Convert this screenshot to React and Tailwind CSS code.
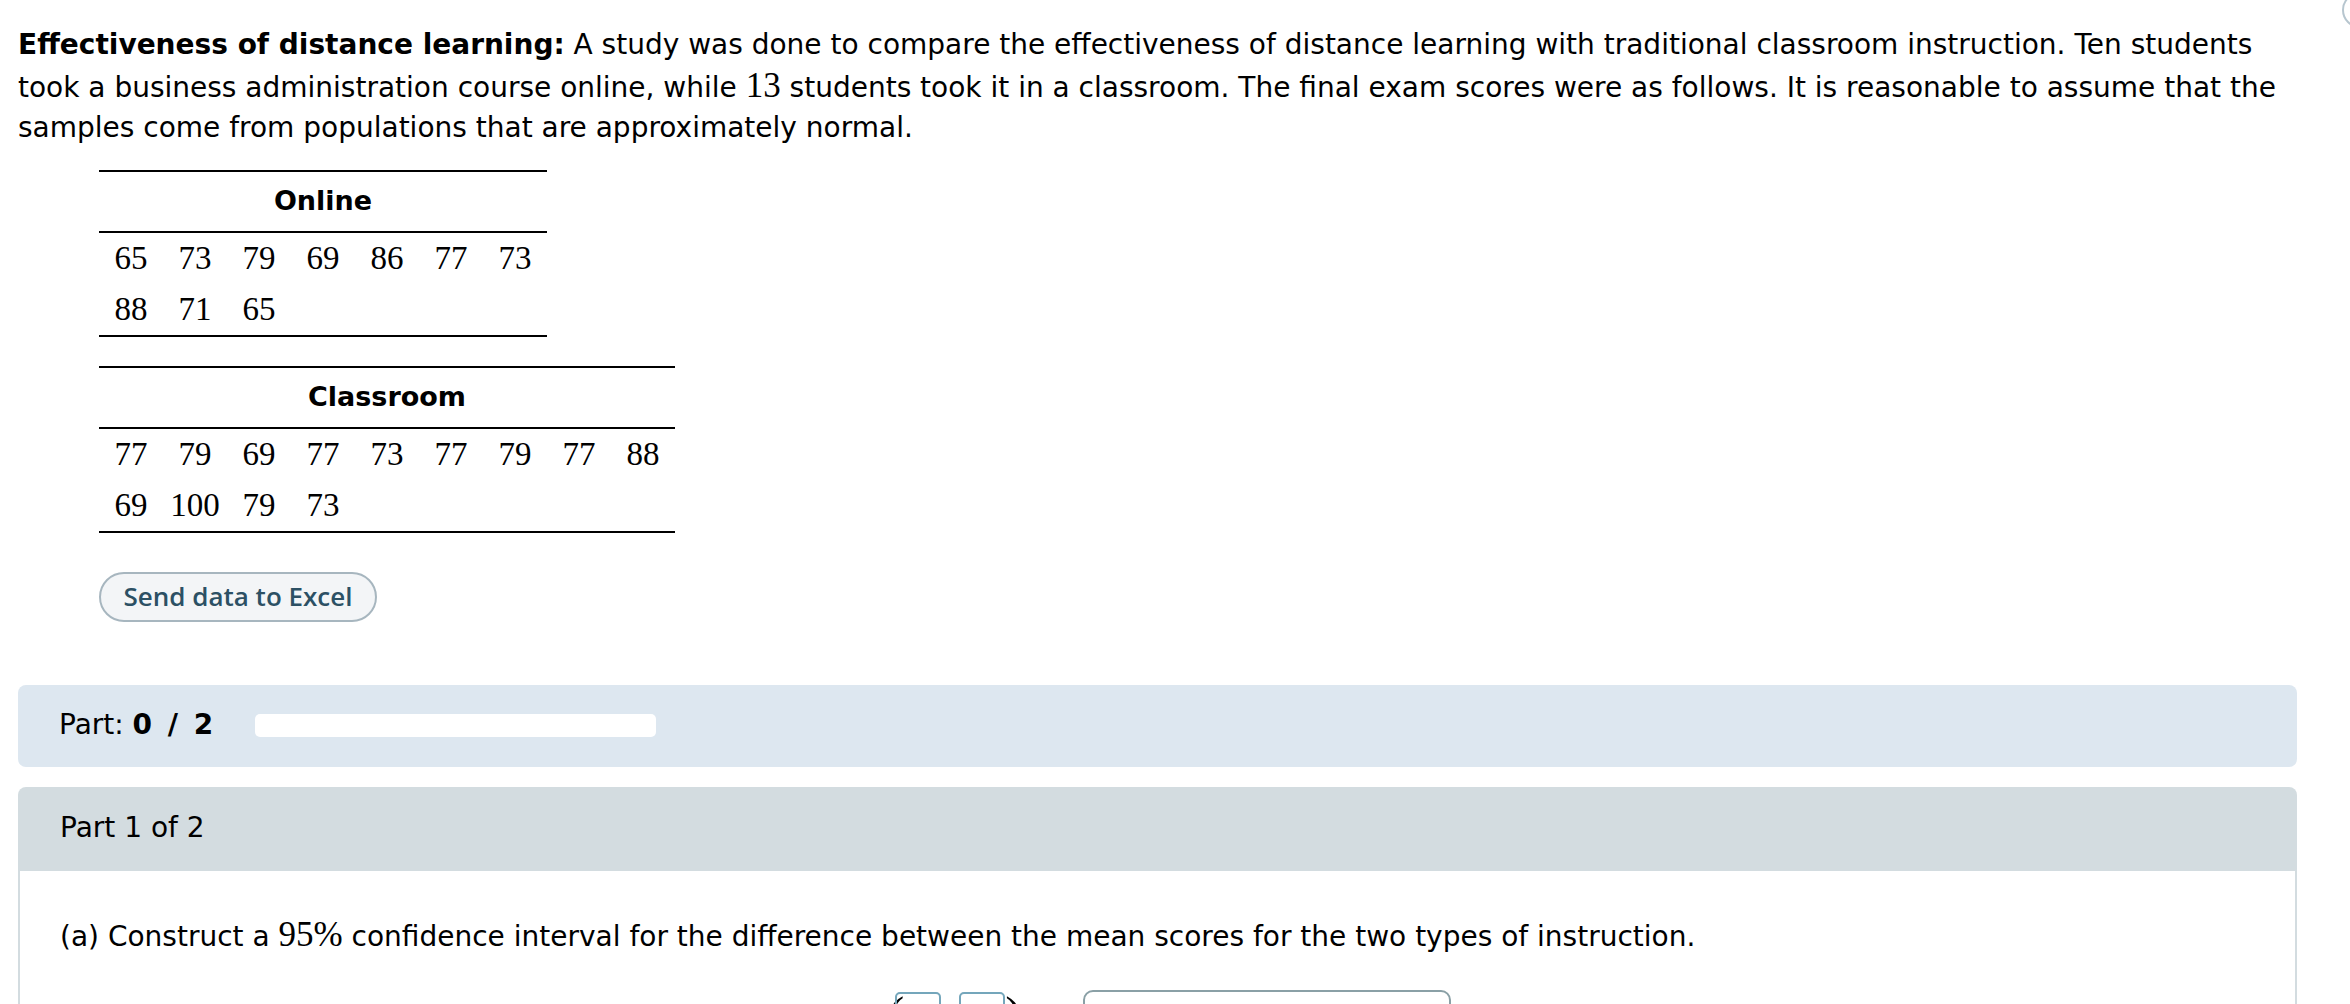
const online = [
  ["65", "73", "79", "69", "86", "77", "73"],
  ["88", "71", "65"],
];

const classroom = [
  ["77", "79", "69", "77", "73", "77", "79", "77", "88"],
  ["69", "100", "79", "73"],
];

function DataTable({ title, rows, cols, width }) {
  return (
    <div className={width}>
      <div className="flex h-[61px] items-center justify-center border-t-2 border-black text-[27px] font-bold">
        {title}
      </div>
      <div className="border-y-2 border-black">
        {rows.map((row, i) => (
          <div key={i} className={`grid ${cols}`}>
            {row.map((n, j) => (
              <div
                key={j}
                className="flex h-[51px] items-center justify-center font-['Liberation_Serif',serif] text-[33px]"
              >
                {n}
              </div>
            ))}
          </div>
        ))}
      </div>
    </div>
  );
}

export default function App() {
  return (
    <div className="relative min-h-screen overflow-hidden bg-white font-['DejaVu_Sans',sans-serif] text-[28px] leading-[40.5px] text-black">
      <div className="absolute left-[2342px] top-[-8px] h-[36px] w-[36px] rounded-full border-2 border-[#b7c6cf]" />
      <div className="pl-[18px] pr-[53px] pt-[25px]">
        <p>
          <span className="font-bold">Effectiveness of distance learning:</span> A study
          was done to compare the effectiveness of distance learning with traditional
          classroom instruction. Ten students
          <br />
          took a business administration course online, while{" "}
          <span className="font-['Liberation_Serif',serif] text-[35px]">13</span> students
          took it in a classroom. The final exam scores were as follows. It is reasonable
          to assume that the
          <br />
          samples come from populations that are approximately normal.
        </p>

        <div className="ml-[81px] mt-[21px]">
          <DataTable title="Online" rows={online} cols="grid-cols-[repeat(7,64px)]" width="w-[448px]" />
          <div className="mt-[29px]">
            <DataTable
              title="Classroom"
              rows={classroom}
              cols="grid-cols-[repeat(9,64px)]"
              width="w-[576px]"
            />
          </div>
          <button className="mt-[39px] flex h-[50px] w-[278px] items-center justify-center rounded-full border-2 border-[#a7b6bf] bg-[#f3f5f7] font-['Open_Sans',sans-serif] text-[26px] font-semibold text-[#2c5064]">
            Send data to Excel
          </button>
        </div>

        <div className="mt-[63px] flex h-[82px] items-center rounded-[8px] bg-[#dde7f0] pl-[41px]">
          <div className="w-[196px]">
            Part: <span className="font-bold tracking-[3px]">0 / 2</span>
          </div>
          <div className="h-[23px] w-[401px] rounded-[5px] bg-white" />
        </div>

        <div className="mt-[20px] flex h-[84px] items-center rounded-t-[8px] bg-[#d3dce0] pl-[42px]">
          Part 1 of 2
        </div>
        <div className="h-[200px] border-x-2 border-[#d3dce0] bg-white pl-[40px] pt-[44px]">
          <p>
            (a) Construct a{" "}
            <span className="font-['Liberation_Serif',serif] text-[35px]">95%</span>{" "}
            confidence interval for the difference between the mean scores for the two
            types of instruction.
          </p>
          <div className="ml-[827px] mt-[35px] flex items-start">
            <span className="mt-[-6px] font-['Liberation_Serif',serif] text-[52px] leading-[60px]">(</span>
            <div className="ml-[-9px] h-[46px] w-[46px] rounded-[5px] border-2 border-[#74a6bb]" />
            <div className="ml-[18px] h-[46px] w-[46px] rounded-[5px] border-2 border-[#74a6bb]" />
            <span className="mt-[-6px] font-['Liberation_Serif',serif] text-[52px] leading-[60px]">)</span>
            <div className="ml-[60px] mt-[-2px] h-[60px] w-[368px] rounded-[10px] border-2 border-[#8aa0a6]" />
          </div>
        </div>
      </div>
    </div>
  );
}
